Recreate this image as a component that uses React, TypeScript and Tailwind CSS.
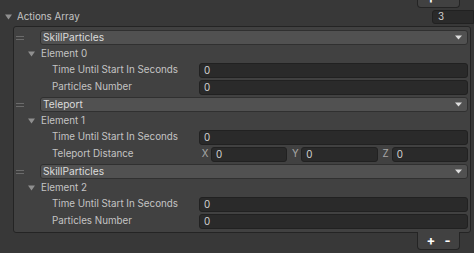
import React from 'react'

type Field = { label: string; kind: 'float' | 'vector' }

type Action = { type: string; fields: Field[] }

const actions: Action[] = [
  {
    type: 'SkillParticles',
    fields: [
      { label: 'Time Until Start In Seconds', kind: 'float' },
      { label: 'Particles Number', kind: 'float' }
    ]
  },
  {
    type: 'Teleport',
    fields: [
      { label: 'Time Until Start In Seconds', kind: 'float' },
      { label: 'Teleport Distance', kind: 'vector' }
    ]
  },
  {
    type: 'SkillParticles',
    fields: [
      { label: 'Time Until Start In Seconds', kind: 'float' },
      { label: 'Particles Number', kind: 'float' }
    ]
  }
]

const Foldout = () => (
  <svg width="7" height="6" viewBox="0 0 7 6" className="shrink-0">
    <path d="M0 0.5 L7 0.5 L3.5 5.5 Z" fill="#8f8f8f" />
  </svg>
)

const NumberBox = ({ value = '0', className = '' }: { value?: string; className?: string }) => (
  <div
    className={`h-[15px] bg-[#2a2a2a] border border-[#212121] rounded-[3px] flex items-center pl-[4px] text-[#d2d2d2] leading-none ${className}`}
  >
    {value}
  </div>
)

const FooterButtons = ({ className = '' }: { className?: string }) => (
  <div
    className={`w-[43px] h-[18px] bg-[#414141] border border-t-0 border-[#242424] rounded-b-[4px] flex items-center justify-around px-[4px] text-white font-bold text-[13px] leading-none ${className}`}
  >
    <span>+</span>
    <span>-</span>
  </div>
)

const FieldRow = ({ field }: { field: Field }) => (
  <div className="h-[17px] flex items-center">
    <div className="w-[185px] pl-[38px] shrink-0 whitespace-nowrap">{field.label}</div>
    {field.kind === 'float' ? (
      <NumberBox className="flex-1 mr-[2px]" />
    ) : (
      <div className="flex-1 mr-[2px] flex gap-[2px]">
        {['X', 'Y', 'Z'].map(axis => (
          <div key={axis} className="flex-1 flex items-center">
            <span className="w-[12px] text-center text-[#a8a8a8]">{axis}</span>
            <NumberBox className="flex-1" />
          </div>
        ))}
      </div>
    )}
  </div>
)

const ActionItem = ({ action, index }: { action: Action; index: number }) => (
  <div>
    <div className="h-[17px] flex items-center">
      <div className="w-[26px] shrink-0 pl-[2px] flex flex-col gap-[2px]">
        <div className="w-[8px] h-px bg-[#6b6b6b]" />
        <div className="w-[8px] h-px bg-[#6b6b6b]" />
      </div>
      <div className="flex-1 mr-[2px] h-[15px] bg-[#515151] border border-[#303030] rounded-[3px] flex items-center pl-[2px] pr-[5px] text-[#dcdcdc] text-[10.2px] leading-none">
        <span className="flex-1">{action.type}</span>
        <svg width="7" height="5" viewBox="0 0 7 5">
          <path d="M0 0.5 L7 0.5 L3.5 4.5 Z" fill="#dedede" />
        </svg>
      </div>
    </div>
    <div className="h-[16px] flex items-center pl-[14px] gap-[6px]">
      <Foldout />
      <span>Element {index}</span>
    </div>
    {action.fields.map((f, i) => (
      <FieldRow key={i} field={f} />
    ))}
  </div>
)

export default function App() {
  return (
    <div className="w-[474px] h-[253px] bg-[#383838] overflow-hidden font-['Inter',sans-serif] text-[9.8px] text-[#c4c4c4]">
      <div className="flex justify-end pr-[14px] -mt-[10px]">
        <FooterButtons />
      </div>
      <div className="h-[18px] flex items-center pl-[5px] gap-[5px]">
        <Foldout />
        <span>Actions Array</span>
        <div className="ml-auto w-[42px] h-[14px] bg-[#2a2a2a] border border-[#212121] rounded-l-[3px] flex items-center pl-[5px] text-[#d2d2d2] leading-none">
          3
        </div>
      </div>
      <div className="ml-[13px] mr-[3px] bg-[#414141] border border-[#242424] rounded-[3px] pt-[2px] pb-[2px]">
        {actions.map((a, i) => (
          <ActionItem key={i} action={a} index={i} />
        ))}
      </div>
      <div className="flex justify-end pr-[14px] -mt-[1px]">
        <FooterButtons />
      </div>
    </div>
  )
}
